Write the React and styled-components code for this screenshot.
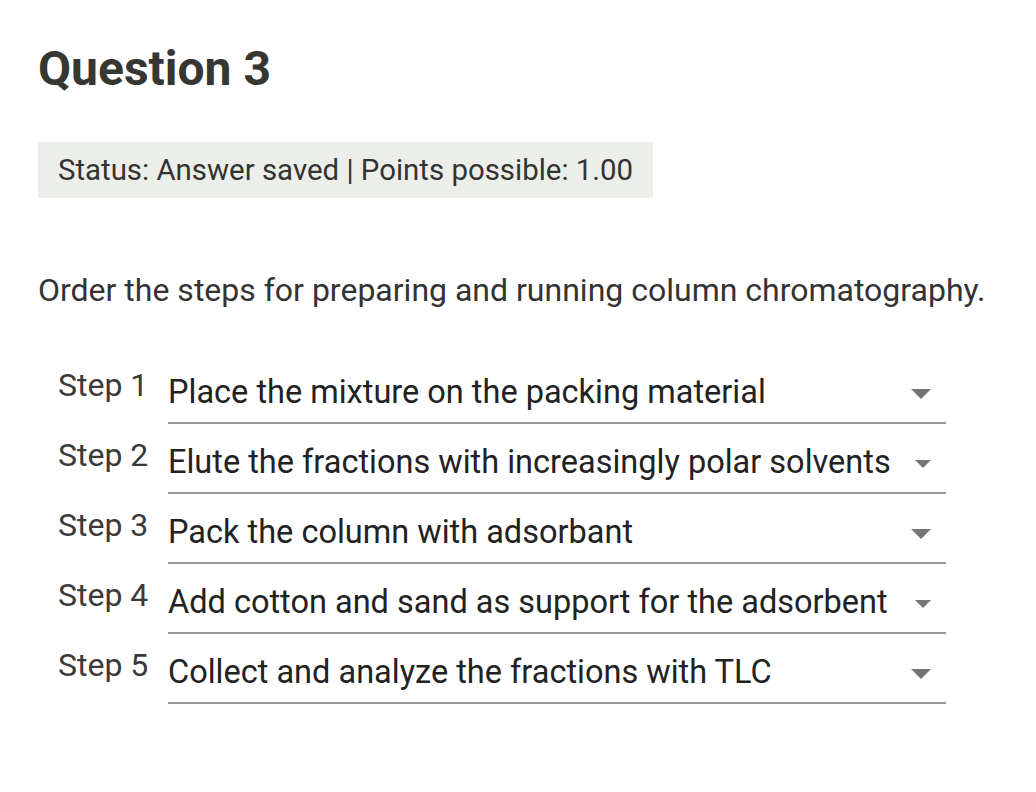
import React from 'react'
import styled, { createGlobalStyle } from 'styled-components'

const GlobalStyle = createGlobalStyle`
    body {
        margin: 0;
        background: #fff;
        font-family: Roboto, "Liberation Sans", sans-serif;
    }
`;

const Page = styled.div`
    padding: 37px 38px 0 38px;
    color: #333;
`;

const Heading = styled.h2`
    margin: 0;
    font-size: 48px;
    font-weight: 700;
    line-height: 64px;
    color: #363633;
`;

const Status = styled.div`
    width: fit-content;
    margin-top: 41px;
    padding: 0 20px;
    height: 56px;
    line-height: 56px;
    background: #ecefe9;
    font-size: 29.4px;
    color: #333;
`;

const Prompt = styled.p`
    margin: 72px 0 0 0;
    font-size: 32px;
    line-height: 40px;
    color: #333;
`;

const Steps = styled.div`
    margin-top: 60px;
    padding-left: 20px;
    display: flex;
    flex-direction: column;
`;

const Row = styled.div`
    display: flex;
    align-items: flex-start;
    height: 70px;
`;

const Label = styled.div`
    width: 110px;
    font-size: 32px;
    line-height: 30px;
    color: #3a3a3a;
`;

const Select = styled.div`
    width: 778px;
    height: 54px;
    box-sizing: border-box;
    padding: 2px 15px 0 0;
    border-bottom: 2px solid #999;
    display: flex;
    align-items: flex-start;
    justify-content: space-between;
    font-size: 32.5px;
    line-height: 40px;
    color: #222;
`;

const Caret = styled.svg`
    flex-shrink: 0;
    margin-top: ${p => (p.$narrow ? '18px' : '17px')};
`;

const steps = [
    'Place the mixture on the packing material',
    'Elute the fractions with increasingly polar solvents',
    'Pack the column with adsorbant',
    'Add cotton and sand as support for the adsorbent',
    'Collect and analyze the fractions with TLC',
];

export default function App() {
    return (
        <>
            <GlobalStyle />
            <Page>
                <Heading>Question 3</Heading>
                <Status>Status: Answer saved | Points possible: 1.00</Status>
                <Prompt>Order the steps for preparing and running column chromatography.</Prompt>
                <Steps>
                    {steps.map((s, i) => {
                        const narrow = s.length > 45;
                        return (
                            <Row key={i}>
                                <Label>Step {i + 1}</Label>
                                <Select>
                                    <span>{s}</span>
                                    <Caret
                                        $narrow={narrow}
                                        width={narrow ? 16 : 20}
                                        height={narrow ? 8 : 10}
                                        viewBox="0 0 20 10"
                                        preserveAspectRatio="none"
                                    >
                                        <path d="M0 0 L20 0 L10 10 Z" fill="#757575" />
                                    </Caret>
                                </Select>
                            </Row>
                        );
                    })}
                </Steps>
            </Page>
        </>
    )
}
